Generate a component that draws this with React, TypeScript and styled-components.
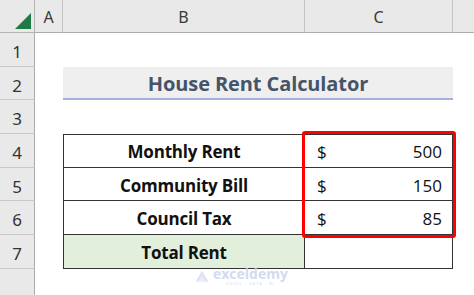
import { createGlobalStyle, styled } from "styled-components";

const GlobalStyle = createGlobalStyle`
  html, body {
    margin: 0;
    padding: 0;
    background: #ffffff;
  }
  body {
    font-family: "Open Sans", "Liberation Sans", sans-serif;
  }
`;

const rows = [
  { label: "Monthly Rent", value: "500" },
  { label: "Community Bill", value: "150" },
  { label: "Council Tax", value: "85" },
];

const App = () => {
  return (
    <>
      <GlobalStyle />
      <Sheet>
        <Corner>
          <SelectAll viewBox="0 0 17 17">
            <polygon points="17,0 17,17 0,17" fill="#1f7a45" />
          </SelectAll>
        </Corner>
        <ColHead>A</ColHead>
        <ColHead>B</ColHead>
        <ColHead>C</ColHead>
        <ColHead $last />

        <RowHead>1</RowHead>
        <Blank />
        <Blank />
        <Blank />
        <Blank />

        <RowHead>2</RowHead>
        <Blank />
        <Title>House Rent Calculator</Title>
        <Blank />

        <RowHead>3</RowHead>
        <Blank />
        <Blank />
        <Blank />
        <Blank />

        {rows.map((r, i) => (
          <Row key={r.label}>
            <RowHead>{i + 4}</RowHead>
            <Blank />
            <Label $top={i === 0}>{r.label}</Label>
            <Amount $top={i === 0}>
              <span>$</span>
              <span>{r.value}</span>
            </Amount>
            <Blank />
          </Row>
        ))}

        <RowHead>7</RowHead>
        <Blank />
        <Label $fill="#e2efda">Total Rent</Label>
        <Amount />
        <Blank />

        {/* row 8 is cut by the window edge, its number is not visible */}
        <RowHead />
        <Blank />
        <Blank />
        <Blank />
        <Blank />

        <RedFrame />

        <Watermark>
          <MarkIcon viewBox="0 0 20 20">
            <path d="M3 15 L10 3 L17 15 Z" fill="#d4dcef" />
            <path d="M6 15 L10 8 L14 15 Z" fill="#e6ebf6" />
          </MarkIcon>
          <MarkText>
            <MarkName>exceldemy</MarkName>
            <MarkSub>EXCEL · DATA · BI</MarkSub>
          </MarkText>
        </Watermark>
      </Sheet>
    </>
  );
};

export default App;

const Sheet = styled.div`
  position: relative;
  display: grid;
  grid-template-columns: 35px 28px 242px 148px 1fr;
  grid-template-rows: 33px repeat(7, 33.7px) 30px;
  width: 474px;
  height: 295px;
  overflow: hidden;
  background: #ffffff;
`;

const Row = styled.div`
  display: contents;
`;

const Corner = styled.div`
  background: #e9e9e9;
  border-right: 1px solid #b5b5b5;
  border-bottom: 1px solid #b5b5b5;
  display: flex;
  align-items: flex-end;
  justify-content: flex-end;
  padding: 0 3px 3px 0;
`;

const SelectAll = styled.svg`
  width: 16px;
  height: 16px;
`;

const ColHead = styled.div<{ $last?: boolean }>`
  background: #e9e9e9;
  border-right: ${(p) => (p.$last ? "none" : "1px solid #c4c4c4")};
  border-bottom: 1px solid #ababab;
  display: flex;
  align-items: center;
  justify-content: center;
  font-family: "Noto Sans", "Liberation Sans", sans-serif;
  font-size: 16px;
  color: #3a3a3a;
  padding-top: 2px;
`;

const RowHead = styled.div`
  background: #e9e9e9;
  border-right: 1px solid #ababab;
  border-bottom: 1px solid #c8c8c8;
  display: flex;
  align-items: center;
  justify-content: center;
  font-family: "Noto Sans", "Liberation Sans", sans-serif;
  font-size: 17px;
  color: #333333;
  padding-top: 4px;
`;

const Blank = styled.div``;

const Title = styled.div`
  grid-column: 3 / 5;
  background: #efefef;
  border-bottom: 2px solid #a2b2dc;
  display: flex;
  align-items: center;
  justify-content: center;
  font-size: 20px;
  font-weight: 700;
  color: #44546a;
  letter-spacing: -0.1px;
  padding-top: 2px;
`;

const Label = styled.div<{ $top?: boolean; $fill?: string }>`
  background: ${(p) => p.$fill ?? "#ffffff"};
  border-left: 1px solid #333333;
  border-right: 1px solid #333333;
  border-bottom: 1px solid #333333;
  border-top: ${(p) => (p.$top ? "1px solid #333333" : "none")};
  display: flex;
  align-items: center;
  justify-content: center;
  font-size: 17px;
  font-weight: 700;
  color: #111111;
  letter-spacing: -0.2px;
  padding-top: 2px;
`;

const Amount = styled.div<{ $top?: boolean }>`
  border-right: 1px solid #333333;
  border-bottom: 1px solid #333333;
  border-top: ${(p) => (p.$top ? "1px solid #333333" : "none")};
  display: flex;
  align-items: center;
  justify-content: space-between;
  padding: 2px 10px 0 12px;
  font-size: 17px;
  color: #111111;
`;

/* highlight drawn over C4:C6 */
const RedFrame = styled.div`
  position: absolute;
  left: 302px;
  top: 131px;
  width: 148px;
  height: 101px;
  border: 3px solid #ff0000;
  border-radius: 3px;
  pointer-events: none;
`;

const Watermark = styled.div`
  position: absolute;
  left: 193px;
  top: 267px;
  display: flex;
  align-items: center;
  gap: 2px;
  opacity: 0.8;
`;

const MarkIcon = styled.svg`
  width: 18px;
  height: 18px;
`;

const MarkText = styled.div`
  display: flex;
  flex-direction: column;
  align-items: center;
  line-height: 1;
`;

const MarkName = styled.span`
  font-size: 14px;
  font-weight: 700;
  color: #c9d3ea;
`;

const MarkSub = styled.span`
  font-size: 4px;
  color: #c9d3ea;
  letter-spacing: 1px;
  margin-top: 1px;
`;
